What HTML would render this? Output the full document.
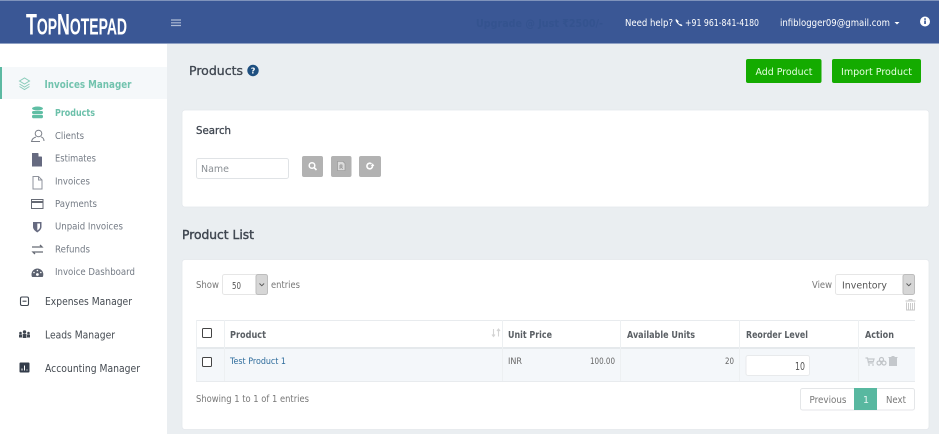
<!DOCTYPE html>
<html><head><meta charset="utf-8"><style>
html,body{margin:0;padding:0;width:939px;height:434px;overflow:hidden;background:#eaeef1}
svg{display:block}
text{font-family:"DejaVu Sans","Liberation Sans",sans-serif;font-size:10px;fill:#6b7280}
.n{font-size:9.5px;fill:#737a84}
.m{font-size:10.5px;fill:#454b52}
.h{font-size:10px;fill:#fff}
.th{font-size:9.5px;font-weight:bold;fill:#5a5f64}
.g{font-size:9.5px;fill:#777}
.s{stroke:#3f4650;stroke-width:.3px;fill:#3f4650}
</style></head><body>
<svg width="939" height="434" viewBox="0 0 939 434" xmlns="http://www.w3.org/2000/svg">
<rect width="939" height="434" fill="#eaeef1"/>
<rect width="939" height="44" fill="#3a5795"/>
<rect width="939" height="1" fill="#7f93bb"/>
<rect y="43" width="939" height="1" fill="#8ea0c4"/>
<text x="26" y="34.500" textLength="101" lengthAdjust="spacingAndGlyphs" style="font-family:'Liberation Sans',sans-serif;font-weight:bold;fill:#fff;font-size:30px">T<tspan style="font-size:23.500px">OP</tspan>N<tspan style="font-size:23.500px">OTEPAD</tspan></text>
<path d="M171 20h10M171 22.800h10M171 25.500h10" stroke="#aebbd5" stroke-width="1.200"/>
<text x="476" y="27" textLength="127" lengthAdjust="spacingAndGlyphs" style="font-size:11px;font-weight:bold;fill:#34538f">Upgrade @ Just ₹2500/-</text>
<text class="h" x="625" y="26" textLength="48" lengthAdjust="spacingAndGlyphs">Need help?</text>
<path d="M676 19c-1 1 0 3 2 5s3.500 2.500 4.500 1.700l-1.500-1.800-1 .5c-1-.6-1.500-1.300-2-2.300l.8-.8z" fill="#fff"/>
<text class="h" x="685" y="26" textLength="74" lengthAdjust="spacingAndGlyphs">+91 961-841-4180</text>
<text class="h" x="780" y="26" textLength="110" lengthAdjust="spacingAndGlyphs">infiblogger09@gmail.com</text>
<path d="M894.500 22h5l-2.500 2.500z" fill="#fff"/>
<circle cx="925" cy="21.500" r="5" fill="#fff"/><rect x="924.200" y="20.500" width="1.700" height="3.500" fill="#3a5795"/><rect x="924.200" y="18.300" width="1.700" height="1.500" fill="#3a5795"/>

<rect y="44" width="167" height="390" fill="#fff"/>
<rect y="67" width="167" height="32" fill="#f5f8fa"/>
<rect y="67" width="2" height="32" fill="#5cb9a2"/>
<path d="M19.500 81l5-3 5 3-5 3zM19.500 84l5 3 5-3M19.500 86.500l5 3 5-3" fill="none" stroke="#8accba" stroke-width="1"/>
<text x="44.500" y="88" textLength="87" lengthAdjust="spacingAndGlyphs" style="font-size:10.500px;font-weight:bold;fill:#72c3ae">Invoices Manager</text>
<text x="55" y="116" textLength="40" lengthAdjust="spacingAndGlyphs" style="font-size:9.500px;font-weight:bold;fill:#6cc0aa">Products</text>
<g fill="#5fbea4"><ellipse cx="37.500" cy="108.500" rx="5.500" ry="2"/><rect x="32" y="111" width="11" height="3" rx="1.500"/><rect x="32" y="114.800" width="11" height="3.500" rx="1.700"/></g>
<g fill="none" stroke="#7c8089" stroke-width="1"><circle cx="38.500" cy="133.500" r="3.300"/><path d="M36 137c-2.500.7-4 2.300-4.500 4.500h8.500M41 136.800c2 .7 3 2.200 3 4.200"/></g>
<text class="n" x="55" y="139" textLength="29" lengthAdjust="spacingAndGlyphs">Clients</text>
<path d="M32 153h6l4 4v9.500H32z" fill="#666a80"/><path d="M38.500 153v3.500H42z" fill="#fff"/>
<text class="n" x="55" y="161.500" textLength="41" lengthAdjust="spacingAndGlyphs">Estimates</text>
<path d="M33 176.500h5.500l3.500 3.500v9h-9zM38.500 176.500v3.500h3.500" fill="#fff" stroke="#8f939c" stroke-width="1"/>
<text class="n" x="55" y="184.500" textLength="35" lengthAdjust="spacingAndGlyphs">Invoices</text>
<rect x="31.500" y="199.500" width="11.500" height="9" fill="#fff" stroke="#666a74"/><rect x="31.500" y="201" width="11.500" height="2" fill="#666a74"/>
<text class="n" x="55" y="207" textLength="42" lengthAdjust="spacingAndGlyphs">Payments</text>
<path d="M33 222h8.500v5c0 2-2 4-4.250 5.500C35 231 33 229 33 227z" fill="#666a80"/><path d="M37.300 223.500h2.700v3.500c0 1.300-1.200 2.500-2.700 3.500z" fill="#fff"/>
<text class="n" x="55" y="229.500" textLength="68" lengthAdjust="spacingAndGlyphs">Unpaid Invoices</text>
<path d="M32 247h10l-2-2M43 252H33l2 2" fill="none" stroke="#666a74" stroke-width="1.300"/>
<text class="n" x="55" y="252.500" textLength="35" lengthAdjust="spacingAndGlyphs">Refunds</text>
<path d="M31.500 274.500a5.900 6 0 1 1 11.800 0c0 1.500-.4 2.500-1 2.500H32.500c-.6 0-1-1-1-2.500z" fill="#5c6270"/><circle cx="37.400" cy="274.500" r="1.400" fill="#fff"/><circle cx="34" cy="272.500" r=".8" fill="#fff"/><circle cx="40.800" cy="272.500" r=".8" fill="#fff"/><circle cx="37.400" cy="270.500" r=".8" fill="#fff"/>
<text class="n" x="55" y="275" textLength="80" lengthAdjust="spacingAndGlyphs">Invoice Dashboard</text>
<rect x="20.500" y="297" width="8" height="8.500" rx="1.500" fill="none" stroke="#3f4650" stroke-width="1.100"/><path d="M22.500 301.200h4" stroke="#3f4650" stroke-width="1.100"/>
<text class="m" x="45" y="305" textLength="87" lengthAdjust="spacingAndGlyphs">Expenses Manager</text>
<g fill="#3f4650"><circle cx="24.500" cy="332" r="1.700"/><circle cx="20.500" cy="333" r="1.300"/><circle cx="28.500" cy="333" r="1.300"/><rect x="22.700" y="334" width="3.700" height="4"/><rect x="19" y="334.500" width="3" height="3"/><rect x="27" y="334.500" width="3" height="3"/></g>
<text class="m" x="45" y="338.500" textLength="70" lengthAdjust="spacingAndGlyphs">Leads Manager</text>
<rect x="19.500" y="362.500" width="10" height="10" rx="1" fill="#333c4a"/><path d="M22 370.500v-2M24.500 370.500v-5M27 370.500v-1" stroke="#fff" stroke-width="1"/>
<text class="m" x="45" y="372" textLength="95" lengthAdjust="spacingAndGlyphs">Accounting Manager</text>

<text class="s" x="189" y="75" textLength="54" lengthAdjust="spacingAndGlyphs" style="font-size:12.500px">Products</text>
<circle cx="253" cy="70.500" r="5.700" fill="#1e4f80"/>
<text x="250.800" y="73.500" style="font-size:8px;font-weight:bold;fill:#fff">?</text>
<rect x="746" y="59" width="75.500" height="24" rx="2" fill="#14ab00"/>
<text x="755.500" y="75" textLength="57" lengthAdjust="spacingAndGlyphs" style="font-size:10px;fill:#e6ffe0">Add Product</text>
<rect x="832" y="59" width="89" height="24" rx="2" fill="#14ab00"/>
<text x="841" y="75" textLength="71" lengthAdjust="spacingAndGlyphs" style="font-size:10px;fill:#e6ffe0">Import Product</text>

<rect x="182" y="110" width="747" height="97" rx="3" fill="#fff" stroke="#e4e8ec" stroke-width=".8"/>
<text class="s" x="196" y="134" textLength="35" lengthAdjust="spacingAndGlyphs" style="font-size:10.500px">Search</text>
<rect x="196.500" y="158.500" width="92" height="20" rx="2" fill="#fff" stroke="#e0e3e6"/>
<text x="201" y="172" textLength="28" lengthAdjust="spacingAndGlyphs" style="font-size:10px;fill:#8a8f94">Name</text>
<rect x="302" y="156" width="21" height="21" rx="2" fill="#b2b2b2"/>
<circle cx="312" cy="165.500" r="2.800" fill="none" stroke="#fff" stroke-width="1.500"/><path d="M314 167.500l2.500 2.500" stroke="#fff" stroke-width="1.600"/>
<rect x="331" y="156" width="20.500" height="21" rx="2" fill="#b2b2b2"/>
<path d="M337.500 161.500h5.500l2 2v7h-7.500z" fill="#dcdcdc" stroke="#8f8f8f" stroke-width=".6"/><path d="M340 165v4M340 165h2v2h-2M341.500 167l1 2" stroke="#888" stroke-width=".7" fill="none"/>
<rect x="359" y="156" width="22" height="21" rx="2" fill="#b2b2b2"/>
<path d="M372.500 166a2.800 2.800 0 1 1-1-2.100" fill="none" stroke="#fff" stroke-width="1.600"/><path d="M372.800 163.300l1.500 2.700h-3.500z" fill="#fff"/>

<text class="s" x="182" y="239" textLength="72" lengthAdjust="spacingAndGlyphs" style="font-size:12px;stroke-width:.4px">Product List</text>

<rect x="182" y="259.500" width="747" height="170" rx="3" fill="#fff" stroke="#e4e8ec" stroke-width=".8"/>
<text class="g" x="196" y="288" textLength="23" lengthAdjust="spacingAndGlyphs">Show</text>
<rect x="222.500" y="274.500" width="45" height="20" rx="2" fill="#fff" stroke="#e6e6e6"/>
<rect x="256" y="274.500" width="11.500" height="20" rx="2" fill="#d6d6d6" stroke="#bdbdbd"/>
<path d="M259.500 283.500l2.300 2.300 2.300-2.300" fill="none" stroke="#555" stroke-width=".9"/>
<text x="232" y="289" textLength="9" lengthAdjust="spacingAndGlyphs" style="font-size:9.500px;fill:#555">50</text>
<text class="g" x="271" y="288" textLength="29" lengthAdjust="spacingAndGlyphs">entries</text>
<text class="g" x="812" y="288" textLength="20" lengthAdjust="spacingAndGlyphs">View</text>
<rect x="835.500" y="274.500" width="79" height="20" rx="2" fill="#fff" stroke="#e6e6e6"/>
<rect x="903" y="274.500" width="11.500" height="20" rx="2" fill="#d6d6d6" stroke="#bdbdbd"/>
<path d="M906.500 283.500l2.300 2.300 2.300-2.300" fill="none" stroke="#555" stroke-width=".9"/>
<text x="842" y="288.500" textLength="45" lengthAdjust="spacingAndGlyphs" style="font-size:10px;fill:#555">Inventory</text>
<path d="M905.500 301h10M909 301v-1.500h3v1.500M906.500 302.500v7.500h8v-7.500M908.500 303v6.500M910.500 303v6.500M912.500 303v6.500" fill="none" stroke="#c6c6c6" stroke-width=".9"/>

<rect x="196" y="348" width="719" height="33.500" fill="#f4f7fa"/>
<path d="M196 320.500h719M196 381.500h719" stroke="#e8ebee"/>
<rect x="196" y="347" width="719" height="2" fill="#e5e9ec"/>
<path d="M196.500 320v61M224.500 320v61M502.500 320v61M620.500 320v61M739.500 320v61M858.500 320v61" stroke="#edf0f2"/>
<rect x="202.500" y="328.500" width="9" height="9" rx="1" fill="#fff" stroke="#444" stroke-width="1"/>
<rect x="202.500" y="357.500" width="9" height="9" rx="1" fill="#fff" stroke="#444" stroke-width="1"/>
<text class="th" x="230" y="338" textLength="36" lengthAdjust="spacingAndGlyphs">Product</text>
<text class="th" x="508" y="338" textLength="44" lengthAdjust="spacingAndGlyphs">Unit Price</text>
<text class="th" x="627" y="338" textLength="68" lengthAdjust="spacingAndGlyphs">Available Units</text>
<text class="th" x="746" y="338" textLength="62" lengthAdjust="spacingAndGlyphs">Reorder Level</text>
<text class="th" x="865" y="338" textLength="29" lengthAdjust="spacingAndGlyphs">Action</text>
<path d="M493.500 329v7.500M498.500 329v7.500M492 334.500l1.500 2 1.500-2M497 331l1.500-2 1.500 2" fill="none" stroke="#d4d4d4" stroke-width="1.100"/>
<text x="230" y="364" textLength="56" lengthAdjust="spacingAndGlyphs" style="font-size:9px;fill:#2e6c9c">Test Product 1</text>
<text x="508" y="364" textLength="14" lengthAdjust="spacingAndGlyphs" style="font-size:8.500px;fill:#666">INR</text>
<text x="590" y="364" textLength="25" lengthAdjust="spacingAndGlyphs" style="font-size:8.500px;fill:#666">100.00</text>
<text x="725" y="364" textLength="9" lengthAdjust="spacingAndGlyphs" style="font-size:8.500px;fill:#666">20</text>
<rect x="746" y="355.500" width="63.500" height="20" rx="2" fill="#fff" stroke="#e8eaec"/>
<text x="795" y="370" textLength="10" lengthAdjust="spacingAndGlyphs" style="font-size:10.500px;fill:#555">10</text>
<path d="M865.500 358h2l1 5h5M868 359h6l-.7 2.500h-4.800" fill="none" stroke="#c4c8cc" stroke-width="1.200"/><circle cx="869" cy="365" r=".9" fill="#c4c8cc"/><circle cx="873" cy="365" r=".9" fill="#c4c8cc"/>
<g fill="none" stroke="#c0c4c8" stroke-width="1.200"><circle cx="881.500" cy="359.500" r="2"/><circle cx="879" cy="363" r="2"/><circle cx="884" cy="363" r="2"/></g>
<path d="M889 358h8v8h-8z M888.500 357h9v1h-9zM891.500 356h3v1h-3z" fill="#c4c8cc"/>

<text class="g" x="196" y="402" textLength="113" lengthAdjust="spacingAndGlyphs">Showing 1 to 1 of 1 entries</text>
<rect x="800.500" y="388.500" width="114" height="21.500" rx="2" fill="#fff" stroke="#e4e6e8"/>
<text class="g" x="809.500" y="403" textLength="37" lengthAdjust="spacingAndGlyphs">Previous</text>
<rect x="854" y="388" width="23" height="22" fill="#58b8a0"/>
<text x="863" y="403" style="font-size:9.500px;fill:#e8f6f2">1</text>
<text class="g" x="886" y="403" textLength="20" lengthAdjust="spacingAndGlyphs">Next</text>
</svg>
</body></html>
